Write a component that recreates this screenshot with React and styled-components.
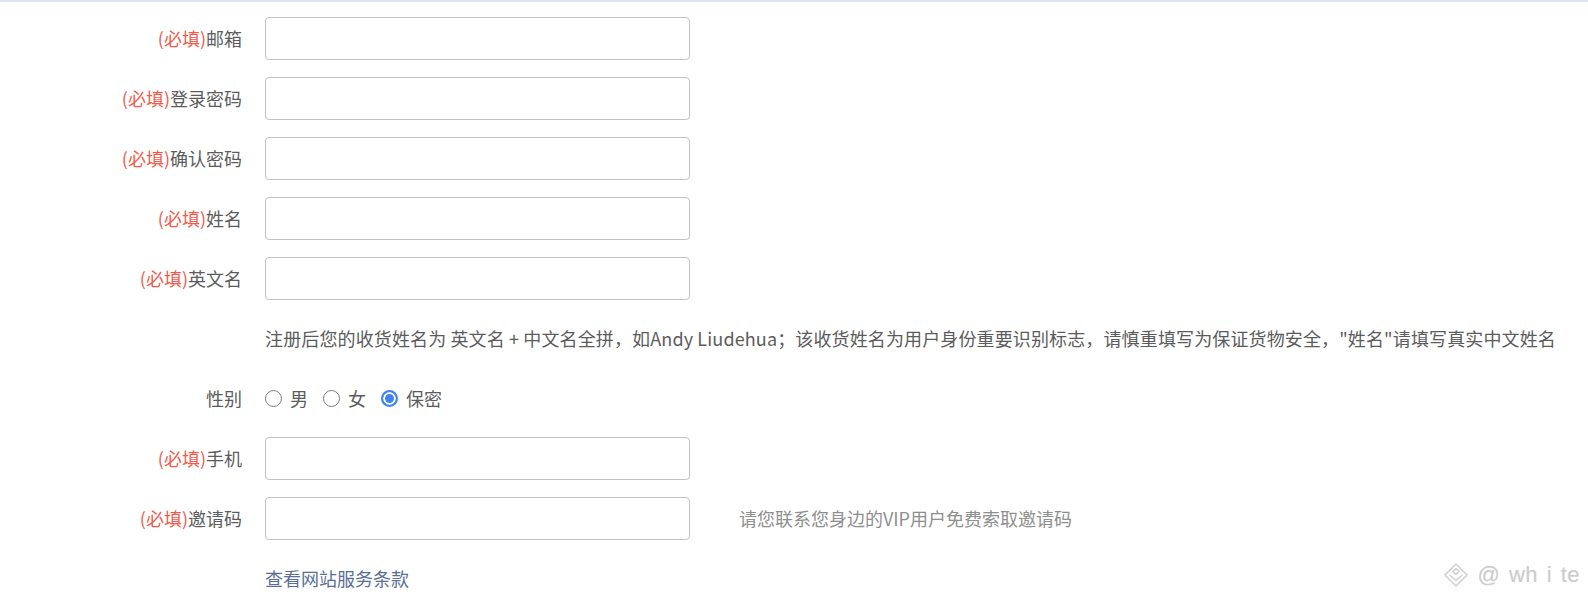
import React from "react";
import styled, { createGlobalStyle } from "styled-components";

const Global = createGlobalStyle`
  html, body { margin: 0; padding: 0; background: #fff; }
  body { font-family: "Noto Sans CJK SC", "Noto Sans", sans-serif; }
  * { box-sizing: border-box; }
`;

const Page = styled.div`
  position: relative;
  width: 1588px;
  height: 600px;
  overflow: hidden;
  border-top: 2px solid #dae4f3;
  padding-top: 6px;
  background: #fff;
`;

const Form = styled.form`
  display: flex;
  flex-direction: column;
`;

const Row = styled.div`
  display: grid;
  grid-template-columns: 242px auto auto;
  column-gap: 23px;
  align-items: center;
  justify-content: start;
  height: 60px;
`;

const Label = styled.label`
  text-align: right;
  font-size: 18px;
  color: #5c5c5c;
  white-space: nowrap;
`;

const Required = styled.span`
  color: #f25a4b;
`;

const Input = styled.input`
  width: 425px;
  height: 43px;
  border: 1px solid #c2c2c2;
  border-radius: 4px;
  outline: none;
  padding: 0 10px;
  font-size: 16px;
  background: #fff;
`;

const Note = styled.div`
  font-size: 18px;
  color: ${(p) => (p.$muted ? "#8f8f8f" : "#5c5c5c")};
  margin-left: ${(p) => p.$offset || 0}px;
  letter-spacing: ${(p) => (p.$muted ? 0 : 0.13)}px;
  white-space: nowrap;
`;

const RadioGroup = styled.div`
  display: flex;
  align-items: center;
  gap: 15px;
`;

const RadioItem = styled.label`
  display: flex;
  align-items: center;
  gap: 8px;
  font-size: 18px;
  color: #5c5c5c;
  cursor: pointer;
`;

const Radio = styled.input.attrs({ type: "radio" })`
  appearance: none;
  margin: 0;
  width: 17px;
  height: 17px;
  border-radius: 50%;
  border: 1.5px solid #7d7d7d;
  background: #fff;
  &:checked {
    border: 2px solid #3f85f2;
    background: #3f85f2;
    box-shadow: inset 0 0 0 2px #fff;
  }
`;

const Link = styled.a`
  font-size: 18px;
  color: #5a6f96;
  text-decoration: none;
  cursor: pointer;
`;

const Watermark = styled.div`
  position: absolute;
  right: 8px;
  bottom: 12px;
  display: flex;
  align-items: center;
  gap: 8px;
  font-family: "Liberation Sans", sans-serif;
  font-size: 22px;
  color: #cdcdcd;
  text-shadow: 0 0 1px #e6e6e6;
  letter-spacing: 0.5px;
`;

const WmText = styled.span`
  word-spacing: 2px;
`;

const JuejinLogo = () => (
  <svg width="26" height="26" viewBox="0 0 26 26" fill="none" stroke="#d0d0d0" strokeWidth="1.6" strokeLinejoin="round">
    <path d="M13 2 L24 13 L13 24 L2 13 Z" />
    <path d="M13 6.5 L16 9.5 L13 12.5 L10 9.5 Z" />
    <path d="M6.5 13 L13 18.5 L19.5 13" />
  </svg>
);

const fields = [
  { label: "邮箱", type: "email" },
  { label: "登录密码", type: "password" },
  { label: "确认密码", type: "password" },
  { label: "姓名", type: "text" },
  { label: "英文名", type: "text" },
];

export default function App() {
  return (
    <>
      <Global />
      <Page>
        <Form onSubmit={(e) => e.preventDefault()}>
          {fields.map((f) => (
            <Row key={f.label}>
              <Label>
                <Required>(必填)</Required>
                {f.label}
              </Label>
              <Input type={f.type} />
            </Row>
          ))}
          <Row>
            <span />
            <Note>
              注册后您的收货姓名为 英文名 + 中文名全拼，如Andy Liudehua；该收货姓名为用户身份重要识别标志，请慎重填写为保证货物安全，"姓名"请填写真实中文姓名
            </Note>
          </Row>
          <Row>
            <Label>性别</Label>
            <RadioGroup>
              <RadioItem>
                <Radio name="sex" />男
              </RadioItem>
              <RadioItem>
                <Radio name="sex" />女
              </RadioItem>
              <RadioItem>
                <Radio name="sex" defaultChecked />保密
              </RadioItem>
            </RadioGroup>
          </Row>
          <Row>
            <Label>
              <Required>(必填)</Required>手机
            </Label>
            <Input type="tel" />
          </Row>
          <Row>
            <Label>
              <Required>(必填)</Required>邀请码
            </Label>
            <Input type="text" />
            <Note $muted $offset={26}>请您联系您身边的VIP用户免费索取邀请码</Note>
          </Row>
          <Row>
            <span />
            <Link>查看网站服务条款</Link>
          </Row>
        </Form>
        <Watermark>
          <JuejinLogo />
          <WmText>@ wh i te</WmText>
        </Watermark>
      </Page>
    </>
  );
}
